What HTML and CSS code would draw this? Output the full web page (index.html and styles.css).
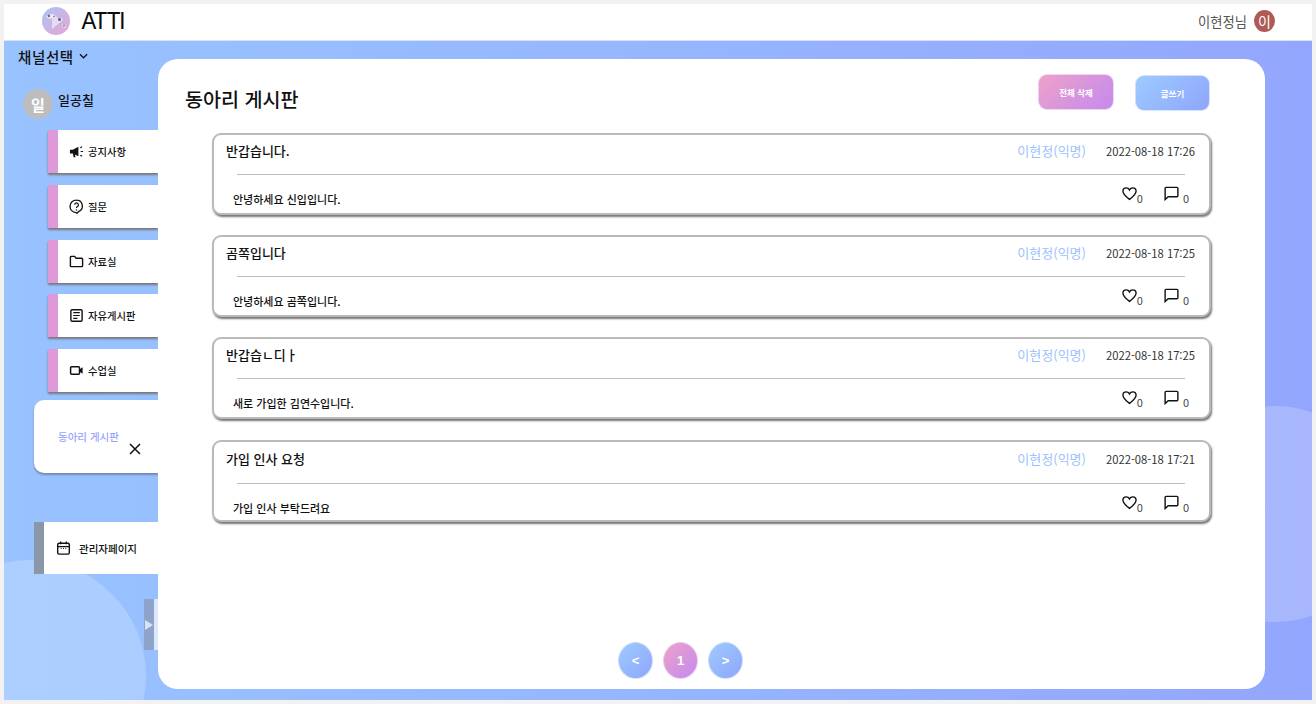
FILE: index.html
```html
<!DOCTYPE html>
<html lang="ko">
<head>
<meta charset="utf-8">
<title>ATTI</title>
<link rel="stylesheet" href="styles.css">
</head>
<body>
<div class="app">
  <header class="topbar">
    <div class="brand">
      <svg class="logo" viewBox="0 0 28 28" aria-hidden="true">
        <defs><linearGradient id="lg" x1="0" y1="0" x2="1" y2="1"><stop offset="0" stop-color="#a9c4f5"/><stop offset="1" stop-color="#e9a5d2"/></linearGradient></defs>
        <circle cx="14" cy="14" r="14" fill="url(#lg)"/>
        <path d="M10 6 L20 14 L10 22Z" fill="#e3dcf3"/>
        <path d="M4 10l5-3 3 2-4 3zM15 12l4-1 2 2-4 2zM21 17l3 1-1 3-3-2z" fill="#efeff4"/>
        <circle cx="7" cy="9" r="1.2" fill="#6a6a86"/><circle cx="17.500" cy="12.500" r="1.500" fill="#4a5c86"/><circle cx="22" cy="18.500" r="1" fill="#77778c"/><circle cx="12" cy="9.500" r=".8" fill="#b0558f"/>
      </svg>
      <span class="brand-name">ATTI</span>
    </div>
    <div class="account">
      <span class="account-name">이현정님</span>
      <span class="account-avatar">이</span>
    </div>
  </header>

  <div class="stage">
    <div class="blob blob-left"></div>
    <div class="blob blob-right"></div>

    <aside class="sidebar">
      <div class="channel">채널선택
        <svg class="chevron" viewBox="0 0 10 6" aria-hidden="true"><path d="M1 1l4 4 4-4" fill="none" stroke="#111" stroke-width="1.400"/></svg>
      </div>
      <div class="profile">
        <span class="profile-avatar">일</span>
        <span class="profile-name">일공칠</span>
      </div>
      <nav class="menu">
        <a class="menu-item">
          <svg class="menu-icon" viewBox="0 0 16 16" aria-hidden="true"><path d="M1 6h3l6-3v10L4 10H1z" fill="#111"/><path d="M4 10l1 4h2l-1-4z" fill="#111"/><path d="M12 4l2-1M12.500 8H15M12 12l2 1" stroke="#111" stroke-width="1.300" fill="none"/></svg>
          공지사항
        </a>
        <a class="menu-item">
          <svg class="menu-icon" viewBox="0 0 16 16" aria-hidden="true"><path d="M8 1.200a6.300 6.300 0 0 1 2.600 12L8.500 15.200 7.500 14.500A6.300 6.300 0 0 1 8 1.200z" fill="none" stroke="#111" stroke-width="1.400"/><path d="M6 6.200a2 2 0 1 1 3 1.800c-.7.400-1 .8-1 1.600" fill="none" stroke="#111" stroke-width="1.300"/><circle cx="8" cy="11.600" r=".8" fill="#111"/></svg>
          질문
        </a>
        <a class="menu-item">
          <svg class="menu-icon" viewBox="0 0 16 16" aria-hidden="true"><path d="M1.500 3.500a1 1 0 0 1 1-1h3.500l1.500 2h6a1 1 0 0 1 1 1v7a1 1 0 0 1-1 1h-11a1 1 0 0 1-1-1z" fill="none" stroke="#111" stroke-width="1.500"/></svg>
          자료실
        </a>
        <a class="menu-item">
          <svg class="menu-icon" viewBox="0 0 16 16" aria-hidden="true"><rect x="2" y="1.800" width="12" height="12.400" rx="1.500" fill="none" stroke="#111" stroke-width="1.500"/><path d="M4.500 5h7M4.500 8h7M4.500 11h4.500" stroke="#111" stroke-width="1.300"/></svg>
          자유게시판
        </a>
        <a class="menu-item">
          <svg class="menu-icon" viewBox="0 0 16 16" aria-hidden="true"><rect x="1.700" y="4" width="9.500" height="8" rx="1" fill="none" stroke="#111" stroke-width="1.600"/><path d="M11 7l3.500-2.500v7L11 9z" fill="#111"/></svg>
          수업실
        </a>
      </nav>
      <div class="open-tab">
        <span class="open-tab-label">동아리 게시판</span>
        <svg class="close-icon" viewBox="0 0 12 12" aria-hidden="true"><path d="M1 1l10 10M11 1L1 11" stroke="#111" stroke-width="1.500"/></svg>
      </div>
      <a class="admin-item">
        <svg class="admin-icon" viewBox="0 0 16 16" aria-hidden="true"><rect x="1.800" y="3" width="12.400" height="11.500" rx="1.500" fill="none" stroke="#111" stroke-width="1.500"/><path d="M2 6.500h12" stroke="#111" stroke-width="1.400"/><path d="M5 1v3M11 1v3" stroke="#111" stroke-width="1.400"/><path d="M5 8.500h1M7.500 8.500h1M10 8.500h1" stroke="#111"/></svg>
        관리자페이지
      </a>
      <div class="collapse">
        <span class="collapse-handle"><i class="collapse-arrow"></i></span>
        <span class="collapse-edge"></span>
      </div>
    </aside>

    <main class="panel">
      <div class="panel-head">
        <h1 class="panel-title">동아리 게시판</h1>
        <div class="actions">
          <button class="btn btn-pink">전체 삭제</button>
          <button class="btn btn-blue">글쓰기</button>
        </div>
      </div>

      <div class="posts">
        <article class="post">
          <div class="post-head"><h2 class="post-title">반갑습니다.</h2><span class="post-author">이현정(익명)</span><time class="post-date">2022-08-18 17:26</time></div>
          <hr class="post-rule">
          <div class="post-foot"><p class="post-body">안녕하세요 신입입니다.</p>
            <span class="stat stat-like"><svg class="stat-icon" viewBox="0 0 16 16" aria-hidden="true"><path d="M8 14.300C3 10.500 1 8.300 1 5.600 1 3.500 2.600 2 4.500 2 6 2 7.300 2.800 8 4.200 8.700 2.800 10 2 11.500 2 13.400 2 15 3.500 15 5.600c0 2.700-2 4.900-7 8.700z" fill="none" stroke="#111" stroke-width="1.500"/></svg><b class="stat-num">0</b></span>
            <span class="stat stat-comment"><svg class="stat-icon" viewBox="0 0 16 16" aria-hidden="true"><path d="M1.200 14.500V2.500a1 1 0 0 1 1-1h11.600a1 1 0 0 1 1 1v8a1 1 0 0 1-1 1H4.500z" fill="none" stroke="#111" stroke-width="1.500"/></svg><b class="stat-num">0</b></span>
          </div>
        </article>
        <article class="post">
          <div class="post-head"><h2 class="post-title">곰쪽입니다</h2><span class="post-author">이현정(익명)</span><time class="post-date">2022-08-18 17:25</time></div>
          <hr class="post-rule">
          <div class="post-foot"><p class="post-body">안녕하세요 곰쪽입니다.</p>
            <span class="stat stat-like"><svg class="stat-icon" viewBox="0 0 16 16" aria-hidden="true"><path d="M8 14.300C3 10.500 1 8.300 1 5.600 1 3.500 2.600 2 4.500 2 6 2 7.300 2.800 8 4.200 8.700 2.800 10 2 11.500 2 13.400 2 15 3.500 15 5.600c0 2.700-2 4.900-7 8.700z" fill="none" stroke="#111" stroke-width="1.500"/></svg><b class="stat-num">0</b></span>
            <span class="stat stat-comment"><svg class="stat-icon" viewBox="0 0 16 16" aria-hidden="true"><path d="M1.200 14.500V2.500a1 1 0 0 1 1-1h11.600a1 1 0 0 1 1 1v8a1 1 0 0 1-1 1H4.500z" fill="none" stroke="#111" stroke-width="1.500"/></svg><b class="stat-num">0</b></span>
          </div>
        </article>
        <article class="post">
          <div class="post-head"><h2 class="post-title">반갑습ㄴ디ㅏ</h2><span class="post-author">이현정(익명)</span><time class="post-date">2022-08-18 17:25</time></div>
          <hr class="post-rule">
          <div class="post-foot"><p class="post-body">새로 가입한 김연수입니다.</p>
            <span class="stat stat-like"><svg class="stat-icon" viewBox="0 0 16 16" aria-hidden="true"><path d="M8 14.300C3 10.500 1 8.300 1 5.600 1 3.500 2.600 2 4.500 2 6 2 7.300 2.800 8 4.200 8.700 2.800 10 2 11.500 2 13.400 2 15 3.500 15 5.600c0 2.700-2 4.900-7 8.700z" fill="none" stroke="#111" stroke-width="1.500"/></svg><b class="stat-num">0</b></span>
            <span class="stat stat-comment"><svg class="stat-icon" viewBox="0 0 16 16" aria-hidden="true"><path d="M1.200 14.500V2.500a1 1 0 0 1 1-1h11.600a1 1 0 0 1 1 1v8a1 1 0 0 1-1 1H4.500z" fill="none" stroke="#111" stroke-width="1.500"/></svg><b class="stat-num">0</b></span>
          </div>
        </article>
        <article class="post post-tall">
          <div class="post-head"><h2 class="post-title">가입 인사 요청</h2><span class="post-author">이현정(익명)</span><time class="post-date">2022-08-18 17:21</time></div>
          <hr class="post-rule">
          <div class="post-foot"><p class="post-body">가입 인사 부탁드려요</p>
            <span class="stat stat-like"><svg class="stat-icon" viewBox="0 0 16 16" aria-hidden="true"><path d="M8 14.300C3 10.500 1 8.300 1 5.600 1 3.500 2.600 2 4.500 2 6 2 7.300 2.800 8 4.200 8.700 2.800 10 2 11.500 2 13.400 2 15 3.500 15 5.600c0 2.700-2 4.900-7 8.700z" fill="none" stroke="#111" stroke-width="1.500"/></svg><b class="stat-num">0</b></span>
            <span class="stat stat-comment"><svg class="stat-icon" viewBox="0 0 16 16" aria-hidden="true"><path d="M1.200 14.500V2.500a1 1 0 0 1 1-1h11.600a1 1 0 0 1 1 1v8a1 1 0 0 1-1 1H4.500z" fill="none" stroke="#111" stroke-width="1.500"/></svg><b class="stat-num">0</b></span>
          </div>
        </article>
      </div>

      <div class="pager">
        <button class="page page-blue">&lt;</button>
        <button class="page page-pink">1</button>
        <button class="page page-blue">&gt;</button>
      </div>
    </main>
  </div>
</div>
</body>
</html>
```
FILE: styles.css
```css
* { box-sizing: border-box; }
html, body { height: 100%; }
body {
  margin: 0;
  padding: 4px;
  background: #f2f2f2;
  font-family: "Noto Sans CJK KR", "Noto Sans", sans-serif;
  color: #111;
  overflow: hidden;
}
.app { width: 1308px; height: 696px; display: flex; flex-direction: column; }

.topbar {
  height: 37px;
  flex: none;
  background: #fff;
  border-bottom: 1px solid #d5e2f7;
  display: flex;
  align-items: center;
  justify-content: space-between;
  padding: 0 37px 2px 38px;
}
.brand { display: flex; align-items: center; gap: 11px; }
.logo { width: 28px; height: 28px; display: block; }
.brand-name { font-family: "Inter", "Liberation Sans", sans-serif; font-size: 23px; letter-spacing: -1.800px; line-height: 28px; color: #0b0b0b; }
.account { display: flex; align-items: center; gap: 7px; }
.account-name { font-size: 13.300px; color: #555; }
.account-avatar {
  width: 21px; height: 22px; border-radius: 50%;
  background: #b05a58; color: #fff; font-size: 14px;
  display: flex; align-items: center; justify-content: center;
}

.stage {
  flex: 1;
  position: relative;
  overflow: hidden;
  display: flex;
  background: linear-gradient(90deg, #98c3ff 0%, #96b4ff 55%, #93a6fd 100%);
}
.blob { position: absolute; border-radius: 50%; }
.blob-left { left: -90px; top: 519px; width: 232px; height: 232px; background: rgba(255,255,255,.2); }
.blob-right { left: 1163px; top: 365px; width: 216px; height: 216px; background: rgba(255,255,255,.2); }

.sidebar { width: 154px; flex: none; position: relative; display: flex; flex-direction: column; align-items: flex-end; }
.channel {
  align-self: flex-start;
  margin: 5px 0 0 14px;
  height: 22px;
  font-size: 14.500px;
  font-weight: 500;
  line-height: 22px;
  letter-spacing: .6px;
  display: flex;
  align-items: center;
  gap: 5px;
}
.chevron { width: 9px; height: 6px; margin-top: -3px; }
.profile { align-self: flex-start; margin: 21px 0 0 19px; display: flex; gap: 5px; height: 30px; }
.profile-avatar {
  width: 30px; height: 30px; border-radius: 50%;
  background: #bdbdbd; color: #fff; font-size: 15px; font-weight: 700;
  display: flex; align-items: center; justify-content: center;
}
.profile-name { font-size: 13px; font-weight: 500; line-height: 20px; margin-top: 1px; }

.menu { margin-top: 11px; display: flex; flex-direction: column; gap: 11.750px; align-self: flex-end; }
.menu-item {
  width: 110px; height: 43px;
  background: #fff;
  border-left: 10px solid #de99d8;
  box-shadow: 0 2px 2px #777;
  display: flex; align-items: center;
  padding-left: 11px;
  font-size: 10.300px;
  font-weight: 500;
  gap: 4px;
}
.menu-icon { width: 15px; height: 15px; flex: none; }

.open-tab {
  margin-top: 8px;
  width: 124px; height: 73px;
  background: #fff;
  border-radius: 10px 0 0 10px;
  box-shadow: 0 2px 2px rgba(90,90,110,.55);
  display: flex;
  padding: 29px 0 0 24px;
  font-size: 10.500px;
}
.open-tab-label { color: #99a6fb; font-weight: 500; line-height: 16px; }
.close-icon { width: 12px; height: 12px; margin: 14px 0 0 10px; flex: none; }

.admin-item {
  margin-top: 49px;
  width: 124px; height: 52px;
  background: #fff;
  border-left: 10px solid #8a97a9;
  display: flex; align-items: center;
  padding-left: 12px;
  gap: 8px;
  font-size: 10.500px;
  font-weight: 500;
}
.admin-icon { width: 15px; height: 16px; flex: none; }

.collapse { margin-top: 25px; height: 51px; display: flex; align-self: flex-end; }
.collapse-handle { width: 10px; background: #8ea3c9; display: flex; align-items: center; justify-content: center; }
.collapse-arrow { width: 0; height: 0; border-style: solid; border-width: 5px 0 5px 8px; border-color: transparent transparent transparent #d6e2f5; }
.collapse-edge { width: 4px; background: #dce8fd; }

.panel {
  width: 1107px;
  height: 630px;
  margin-top: 18px;
  background: #fff;
  border-radius: 20px;
  position: relative;
  display: flex;
  flex-direction: column;
  padding: 15px 0 10px 0;
}
.panel-head { display: flex; justify-content: space-between; align-items: flex-start; padding: 0 55px 0 27px; height: 59px; }
.panel-title { margin: 10px 0 0; font-size: 19.600px; font-weight: 500; line-height: 30px; }
.actions { display: flex; gap: 21px; align-items: flex-start; }
.btn {
  width: 76px; height: 36px;
  border: 1px solid rgba(255,255,255,.6);
  border-radius: 9px;
  color: #fff;
  font: 700 8.500px "Noto Sans CJK KR", sans-serif;
  padding: 0;
}
.btn-pink { background: linear-gradient(135deg, #eda1c8, #c48aef); }
.btn-blue { width: 75px; margin-top: 1px; background: linear-gradient(135deg, #9dcbff, #8fa5fb); }

.posts { margin-left: 54px; width: 999px; display: flex; flex-direction: column; gap: 20px; }
.post {
  height: 82px;
  border: 2px solid #bababa;
  border-radius: 9px;
  box-shadow: 1px 2px 2px #777;
  background: #fff;
  padding: 0 13px 0 12px;
  display: flex;
  flex-direction: column;
}
.post-tall { margin-top: 1px; }
.post-head { height: 39px; padding-bottom: 8px; display: flex; align-items: center; flex: none; }
.post-tall .post-head { height: 41px; }
.post-title { margin: 0; font-size: 13px; font-weight: 500; line-height: 20px; flex: 1; }
.post-author { color: #9cc2fd; font-size: 13px; }
.post-date { margin: 0 1px 0 20px; font-size: 11.250px; color: #333; }
.post-rule { margin: 0 11px; height: 1px; border: 0; background: #bdbdbd; flex: none; }
.post-foot { position: relative; flex: 1; display: flex; align-items: flex-start; padding-left: 7px; }
.post-body { margin: 15px 0 0; font-size: 11px; font-weight: 500; line-height: 18px; flex: 1; }
.stat { display: flex; align-items: flex-end; }
.stat-like { margin-top: 11px; }
.stat-comment { margin: 11px 7px 0 21px; gap: 4px; }
.stat-icon { width: 15px; height: 15px; flex: none; display: block; }
.stat-num { font-size: 11px; font-weight: 400; color: #444; line-height: 12px; margin-bottom: -3px; }

.pager { margin-top: auto; display: flex; justify-content: center; gap: 10px; padding-right: 62px; }
.page {
  width: 35px; height: 37px;
  border: 1px solid rgba(255,255,255,.5);
  border-radius: 50%;
  color: #fff;
  font: 700 13px "Liberation Sans", sans-serif;
  padding: 0;
}
.page-blue { background: linear-gradient(135deg, #9dcbff, #8fa5fb); }
.page-pink { background: linear-gradient(135deg, #eda1c8, #c48aef); }
```
